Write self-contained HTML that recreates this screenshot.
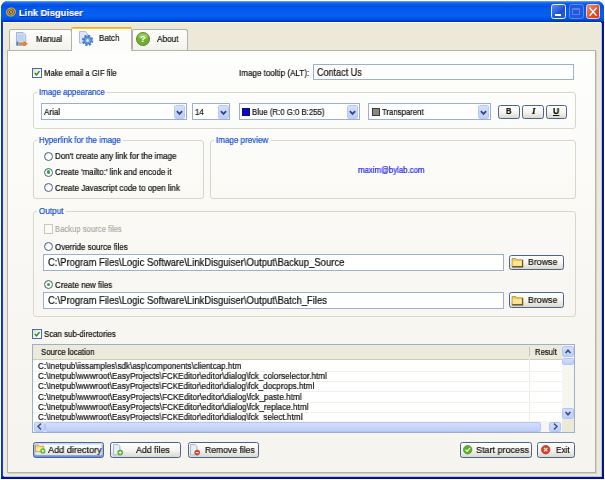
<!DOCTYPE html>
<html><head><meta charset="utf-8"><title>Link Disguiser</title>
<style>
*{box-sizing:border-box;margin:0;padding:0}
html,body{width:605px;height:480px;background:#fff;overflow:hidden}
body{position:relative;font-family:"Liberation Sans",sans-serif;font-size:8.5px;color:#111}
.a{position:absolute}
svg{position:absolute;overflow:visible}
.t{position:absolute;white-space:nowrap;line-height:10px;height:10px;transform-origin:0 0;will-change:transform;-webkit-text-stroke:0.22px}
.win{left:1px;top:0.9px;width:603px;height:477.7px;background:#02148f;border-radius:7px 7px 0 0;overflow:hidden}
.lb{left:0;top:20.6px;width:2.6px;height:455.4px;background:linear-gradient(90deg,#0626b0,#0c3fd8 35%,#1048e0)}
.title{left:0;top:0;width:603px;height:21.6px;background:linear-gradient(#7fb0f8 0,#1f6ff0 7%,#0458e8 16%,#0250e0 26%,#025cee 42%,#0360f2 72%,#0252e0 87%,#0236b8 97%,#0232b0 100%)}
.client{left:2.4px;top:21.4px;width:598px;height:453.5px;background:#ece9d8;border-top:1.3px solid #fbfaf5;box-shadow:0.9px 0.9px 0 #ccd6f2}
.page{left:7px;top:49.5px;width:588.8px;height:423.3px;border:1px solid #b3b5ad;background:linear-gradient(#fefefd,#f8f7f3 55%,#f5f4ee);box-shadow:1px 1px 0 #d6d3c4}
.tab{height:20.4px;top:29.3px;border:1px solid #b0b2aa;border-bottom:none;border-radius:2.5px 2.5px 0 0;background:linear-gradient(#fefefd,#f3f2ec)}
.tab.sel{top:27.2px;height:22.3px;background:#fcfcfb;border-top:none}
.tab.sel:after{content:"";position:absolute;left:0;right:0;bottom:-1.4px;height:1.6px;background:#fcfcfb}
.tab.sel:before{content:"";position:absolute;left:-1px;right:-1px;top:0;height:2px;background:linear-gradient(#eaa024,#ffcf50);border-radius:2.5px 2.5px 0 0}
.grp{border:1px solid #d9d7c9;border-radius:3px}
.gm{background:#faf9f6;height:3px}
.inp{border:1px solid #9cb0cc;background:#fff}
.cb{width:9.7px;height:9.7px;border:1px solid #4c6d9c;background:linear-gradient(135deg,#dcdcd2,#fbfbf8 70%)}
.rd{width:9.2px;height:9.2px;border:1px solid #4a6588;border-radius:50%;background:radial-gradient(circle at 65% 65%,#fff 35%,#d9d9cf)}
.rd.on:after{content:"";position:absolute;left:1.9px;top:1.9px;width:3.4px;height:3.4px;border-radius:50%;background:#33a533}
.btn{border:1px solid #4c6590;border-radius:2.5px;background:linear-gradient(#fff,#f4f3ee 55%,#dcd8cb)}
.btn.foc{box-shadow:inset 0 -1.7px 0 #6b94e6,inset 0 1.5px 0 #c6d7fb,inset 1.5px 0 0 #a4bff2,inset -1.5px 0 0 #a4bff2}
.dd{width:11px;height:14px;background:linear-gradient(#d3dffd,#bdcef8);border:1px solid #b9caf3;border-radius:1.5px}
.sb{background:linear-gradient(#d2defd,#bdcef9);border:1px solid #b4c5f2;border-radius:1.5px}
.gh{height:1px;background:#f2f1ea;left:33px;width:529px}
</style></head><body>
<div class="a win">
 <div class="a title"></div>
 <div class="a lb"></div>
 <div class="a client"></div>
</div>
<!-- app icon -->
<svg class="a" style="left:5.8px;top:7px" width="10" height="10" viewBox="0 0 10 10"><ellipse cx="5" cy="5" rx="4.5" ry="4" transform="rotate(-20 5 5)" fill="#7d7048" stroke="#e8a62c" stroke-width="1"/><ellipse cx="5" cy="5" rx="2.6" ry="2.2" transform="rotate(-20 5 5)" fill="#4a4a40" stroke="#d8b860" stroke-width=".7"/><circle cx="5.1" cy="5" r="1" fill="#f0c040"/></svg>
<!-- caption buttons -->
<div class="a" style="left:551.2px;top:4.2px;width:15px;height:15px;border:1px solid #e8eefc;border-radius:2.5px;background:linear-gradient(135deg,#5d8df2,#1d4fd6 60%,#2a5fe0)"></div>
<div class="a" style="left:555px;top:13.8px;width:5.5px;height:2px;background:#fff"></div>
<div class="a" style="left:568.5px;top:4.2px;width:15px;height:15px;border:1px solid #5c8af0;border-radius:2.5px;background:#2259dc"></div>
<div class="a" style="left:572.3px;top:8px;width:7.5px;height:7px;border:1px solid #5583ea;border-top-width:2px"></div>
<div class="a" style="left:585.8px;top:4.2px;width:14.6px;height:15px;border:1px solid #f0cfc4;border-radius:2.5px;background:linear-gradient(135deg,#ee9274,#df5230 55%,#cf3f18)"></div>
<svg class="a" style="left:589px;top:7.2px" width="8.2" height="9.6" viewBox="0 0 8.4 9.4"><path d="M0.6 0.6 L7.8 8.8 M7.8 0.6 L0.6 8.8" stroke="#fff" stroke-width="1.4" fill="none"/></svg>

<!-- tabs -->
<div class="a page"></div>
<div class="a tab" style="left:9.2px;width:62.4px"></div>
<div class="a tab" style="left:131.6px;width:56.4px"></div>
<div class="a tab sel" style="left:71.2px;width:60.6px"></div>
<!-- tab icons -->
<svg style="left:15.8px;top:32.4px" width="12.4" height="14" viewBox="0 0 12.4 14"><path d="M0.5 0.5h6.6l2.6 2.6v10.4h-9.2z" fill="#c9dcf4" stroke="#8faad0" stroke-width=".8"/><path d="M2 4h5.6M2 6h5.6M2 8h5.6" stroke="#a9bfdf" stroke-width=".7"/><rect x="0.6" y="9.6" width="1.8" height="3.6" fill="#5078b0"/><path d="M3.4 10.8h4.4v-1.3l3.8 2.2-3.8 2.2v-1.3h-4.4z" fill="#f0851a" stroke="#c8620c" stroke-width=".4"/></svg>
<svg style="left:79.4px;top:31.2px" width="15" height="16" viewBox="0 0 15 16"><path d="M0.5 0.5h6l2 2v9.5h-8z" fill="#dbe6f6" stroke="#9db2d2" stroke-width=".8"/><circle cx="8.6" cy="9.4" r="4.6" fill="none" stroke="#4a80cc" stroke-width="2.2" stroke-dasharray="2.1 1.5"/><circle cx="8.6" cy="9.4" r="3.8" fill="#6f9fdc" stroke="#3f70ba" stroke-width=".9"/><circle cx="8.6" cy="9.4" r="1.7" fill="#dfe9f8" stroke="#5a86c6" stroke-width=".5"/></svg>
<svg style="left:135.8px;top:32px" width="14" height="14" viewBox="0 0 14 14"><circle cx="7" cy="7" r="6.6" fill="#6fae2e" stroke="#4f8a1c" stroke-width=".8"/><ellipse cx="7" cy="4.2" rx="4.6" ry="2.8" fill="#a6d46a" opacity=".75"/><text x="7" y="10.3" text-anchor="middle" font-family="Liberation Sans,sans-serif" font-weight="bold" font-size="9.5" fill="#fff">?</text></svg>

<!-- row 1 -->
<div class="a cb" style="left:32.4px;top:68px"></div>
<svg style="left:34.2px;top:69.8px" width="6.4" height="6.4" viewBox="0 0 7 7"><path d="M0.9 3.2 L2.8 5.4 L6 1.2" stroke="#1f8f27" stroke-width="1.6" fill="none"/></svg>
<div class="a inp" style="left:313px;top:63.6px;width:260.6px;height:16.6px"></div>

<!-- Image appearance -->
<div class="a grp" style="left:33px;top:91.8px;width:542.6px;height:37px"></div>
<div class="a gm" style="left:37.2px;top:90.8px;width:70px"></div>
<div class="a inp" style="left:41px;top:103.4px;width:145.8px;height:17px"></div>
<div class="a dd" style="left:174.4px;top:104.9px"></div>
<svg style="left:176.4px;top:109.5px" width="7" height="5.1" viewBox="0 0 6 4.4"><path d="M0.7 0.9 L3 3.4 L5.3 0.9" stroke="#33497a" stroke-width="1.5" fill="none"/></svg>
<div class="a inp" style="left:191.6px;top:103.4px;width:38.6px;height:17px"></div>
<div class="a dd" style="left:217.8px;top:104.9px"></div>
<svg style="left:219.8px;top:109.5px" width="7" height="5.1" viewBox="0 0 6 4.4"><path d="M0.7 0.9 L3 3.4 L5.3 0.9" stroke="#33497a" stroke-width="1.5" fill="none"/></svg>
<div class="a inp" style="left:238.6px;top:103.4px;width:121.2px;height:17px"></div>
<div class="a dd" style="left:347.4px;top:104.9px"></div>
<svg style="left:349.4px;top:109.5px" width="7" height="5.1" viewBox="0 0 6 4.4"><path d="M0.7 0.9 L3 3.4 L5.3 0.9" stroke="#33497a" stroke-width="1.5" fill="none"/></svg>
<div class="a" style="left:242.4px;top:107.8px;width:8px;height:8.4px;background:#0808d8;border:1px solid #101060"></div>
<div class="a inp" style="left:368px;top:103.4px;width:122.6px;height:17px"></div>
<div class="a dd" style="left:478.2px;top:104.9px"></div>
<svg style="left:480.2px;top:109.5px" width="7" height="5.1" viewBox="0 0 6 4.4"><path d="M0.7 0.9 L3 3.4 L5.3 0.9" stroke="#33497a" stroke-width="1.5" fill="none"/></svg>
<div class="a" style="left:372px;top:107.8px;width:8.4px;height:8.4px;background:#8a8884;border:1px solid #3a3a3a"></div>
<div class="a btn" style="left:497.6px;top:104.8px;width:22.6px;height:14px"></div>
<div class="a btn" style="left:521.8px;top:104.8px;width:22.4px;height:14px"></div>
<div class="a btn" style="left:546px;top:104.8px;width:21px;height:14px"></div>

<!-- Hyperlink -->
<div class="a grp" style="left:33px;top:139.8px;width:171.4px;height:59.6px"></div>
<div class="a gm" style="left:37.2px;top:138.8px;width:86px"></div>
<div class="a rd" style="left:44px;top:151.8px"></div>
<div class="a rd on" style="left:44px;top:167.6px"></div>
<div class="a rd" style="left:44px;top:183.2px"></div>

<!-- Image preview -->
<div class="a grp" style="left:210.2px;top:139.8px;width:365.4px;height:59.6px"></div>
<div class="a gm" style="left:214.4px;top:138.8px;width:56.4px"></div>

<!-- Output -->
<div class="a grp" style="left:33px;top:210.8px;width:542.6px;height:106.6px"></div>
<div class="a gm" style="left:37.2px;top:209.8px;width:28.6px"></div>
<div class="a cb" style="left:43.6px;top:224.2px;border-color:#cbc8b8;background:#fbfaf7"></div>
<div class="a rd" style="left:43.9px;top:241.8px"></div>
<div class="a inp" style="left:43.4px;top:254.4px;width:460.6px;height:16.4px"></div>
<div class="a btn" style="left:509.2px;top:255px;width:55px;height:15.4px"></div>
<div class="a rd on" style="left:43.9px;top:280.2px"></div>
<div class="a inp" style="left:43.4px;top:292.2px;width:460.6px;height:16.4px"></div>
<div class="a btn" style="left:509.2px;top:292.4px;width:55px;height:15.4px"></div>
<!-- folder icons -->
<svg style="left:511px;top:257.4px" width="12.6" height="10.4" viewBox="0 0 11 10"><path d="M0.5 1.5h3.6l1 1.2h5.4v6.6h-10z" fill="#f0cc5c" stroke="#b8923a" stroke-width=".8"/><path d="M1.2 4h8.4v4.4h-8.4z" fill="#fbe89a"/><path d="M0.6 9.5h10.1V3" stroke="#5e4a1e" stroke-width="1" fill="none"/></svg>
<svg style="left:511px;top:294.8px" width="12.6" height="10.4" viewBox="0 0 11 10"><path d="M0.5 1.5h3.6l1 1.2h5.4v6.6h-10z" fill="#f0cc5c" stroke="#b8923a" stroke-width=".8"/><path d="M1.2 4h8.4v4.4h-8.4z" fill="#fbe89a"/><path d="M0.6 9.5h10.1V3" stroke="#5e4a1e" stroke-width="1" fill="none"/></svg>

<!-- Scan -->
<div class="a cb" style="left:32.4px;top:329px"></div>
<svg style="left:34.2px;top:330.8px" width="6.4" height="6.4" viewBox="0 0 7 7"><path d="M0.9 3.2 L2.8 5.4 L6 1.2" stroke="#1f8f27" stroke-width="1.6" fill="none"/></svg>

<!-- list -->
<div class="a inp" style="left:32.4px;top:344.4px;width:543px;height:88.6px"></div>
<div class="a" style="left:33.4px;top:345.4px;width:528.6px;height:14.2px;background:#ebeadb;border-bottom:1.4px solid #cfccbc"></div>
<div class="a" style="left:529px;top:347px;width:1px;height:9px;background:#c8c5b2"></div>
<div class="a" style="left:529px;top:358.4px;width:1px;height:63px;background:#eeede5"></div>
<div class="a gh" style="top:370.6px"></div>
<div class="a gh" style="top:381px"></div>
<div class="a gh" style="top:391.4px"></div>
<div class="a gh" style="top:401.8px"></div>
<div class="a gh" style="top:412.2px"></div>
<!-- vscroll -->
<div class="a" style="left:562px;top:345.4px;width:12.4px;height:74px;background:#f6f5f0"></div>
<div class="a sb" style="left:562.4px;top:345.8px;width:11.6px;height:11.6px"></div>
<div class="a sb" style="left:562.4px;top:358px;width:11.6px;height:7px"></div>
<div class="a sb" style="left:562.4px;top:408.4px;width:11.6px;height:10.6px"></div>
<svg style="left:565.2px;top:349.2px" width="6" height="5" viewBox="0 0 6 5"><path d="M0.6 4 L3 1.2 L5.4 4" stroke="#3a507c" stroke-width="1.7" fill="none"/></svg>
<svg style="left:565.2px;top:411.4px" width="6" height="5" viewBox="0 0 6 5"><path d="M0.6 1 L3 3.8 L5.4 1" stroke="#3a507c" stroke-width="1.7" fill="none"/></svg>
<!-- hscroll -->
<div class="a" style="left:33.4px;top:421.4px;width:528.6px;height:10.6px;background:#f6f5f0"></div>
<div class="a" style="left:562px;top:419.4px;width:12.4px;height:12.6px;background:#ece9d8"></div>
<div class="a sb" style="left:33.8px;top:421.6px;width:11px;height:10.2px"></div>
<div class="a sb" style="left:45.4px;top:421.6px;width:496px;height:10.2px"></div>
<div class="a sb" style="left:549.4px;top:421.6px;width:11.6px;height:10.2px"></div>
<svg style="left:37px;top:423.4px" width="5" height="7" viewBox="0 0 5 7"><path d="M4 0.6 L1 3.5 L4 6.4" stroke="#3f557f" stroke-width="1.5" fill="none"/></svg>
<svg style="left:553px;top:423.4px" width="5" height="7" viewBox="0 0 5 7"><path d="M1 0.6 L4 3.5 L1 6.4" stroke="#3f557f" stroke-width="1.5" fill="none"/></svg>

<!-- bottom buttons -->
<div class="a btn foc" style="left:33px;top:442px;width:70.8px;height:15.6px"></div>
<div class="a btn" style="left:110.2px;top:442px;width:71px;height:15.6px"></div>
<div class="a btn" style="left:187.6px;top:442px;width:71.8px;height:15.6px"></div>
<div class="a btn" style="left:460.2px;top:442px;width:71.4px;height:15.6px"></div>
<div class="a btn" style="left:537.4px;top:442px;width:37.8px;height:15.6px"></div>
<!-- button icons -->
<svg style="left:35.4px;top:444.2px" width="11" height="10" viewBox="0 0 12 11"><path d="M0.5 1.2h3.4l1 1.2h4.8v6h-9.2z" fill="#f3d36a" stroke="#b8923a" stroke-width=".8"/><path d="M1.2 3.8h7.8v4h-7.8z" fill="#fbe89a"/><circle cx="8.6" cy="7.6" r="2.8" fill="#4cb32c"/><path d="M8.6 6v3.2M7 7.6h3.2" stroke="#fff" stroke-width="1"/></svg>
<svg style="left:112.8px;top:443.6px" width="11" height="12" viewBox="0 0 11 12"><path d="M0.5 0.5h4.6l1.8 1.8v8.5h-6.4z" fill="#e8eef8" stroke="#9aa8bc" stroke-width=".8"/><circle cx="7.2" cy="8.6" r="2.8" fill="#4cb32c"/><path d="M7.2 7v3.2M5.6 8.6h3.2" stroke="#fff" stroke-width="1"/></svg>
<svg style="left:190.4px;top:443.6px" width="11" height="12" viewBox="0 0 11 12"><path d="M0.5 0.5h4.6l1.8 1.8v8.5h-6.4z" fill="#e8eef8" stroke="#9aa8bc" stroke-width=".8"/><circle cx="7.2" cy="8.6" r="2.8" fill="#e0402c"/><path d="M5.8 8.6h2.8" stroke="#fff" stroke-width="1.1"/></svg>
<svg style="left:463.4px;top:445px" width="9.4" height="9.4" viewBox="0 0 10 10"><circle cx="5" cy="5" r="4.5" fill="#62b02c" stroke="#3f8a1a" stroke-width=".7"/><path d="M2.6 5 L4.4 6.8 L7.4 3.2" stroke="#e8f8c8" stroke-width="1.3" fill="none"/></svg>
<svg style="left:540.5px;top:445px" width="9.4" height="9.4" viewBox="0 0 10 10"><circle cx="5" cy="5" r="4.5" fill="#dc4028" stroke="#a82814" stroke-width=".7"/><path d="M3.2 3.2 L6.8 6.8 M6.8 3.2 L3.2 6.8" stroke="#fce0d8" stroke-width="1.3" fill="none"/></svg>

<div class="t" style="left:19.2px;top:8.1px;font-size:9.5px;transform:scaleX(0.975);font-weight:bold;color:#fff;text-shadow:0.6px 0.6px 0 #0a2a8a">Link Disguiser</div>
<div class="t" style="left:35.6px;top:34.1px;font-size:9.2px;transform:scaleX(0.869);">Manual</div>
<div class="t" style="left:99.2px;top:32.5px;font-size:9.2px;transform:scaleX(0.872);">Batch</div>
<div class="t" style="left:157.0px;top:34.1px;font-size:9.2px;transform:scaleX(0.895);">About</div>
<div class="t" style="left:43.8px;top:67.9px;font-size:9.2px;transform:scaleX(0.835);">Make email a GIF file</div>
<div class="t" style="left:239.3px;top:67.9px;font-size:9.2px;transform:scaleX(0.877);">Image tooltip (ALT):</div>
<div class="t" style="left:317.3px;top:67.6px;font-size:10px;transform:scaleX(0.904);">Contact Us</div>
<div class="t" style="left:39.2px;top:86.6px;font-size:9.2px;transform:scaleX(0.859);color:#1a4fd0">Image appearance</div>
<div class="t" style="left:44.2px;top:107.0px;font-size:9.2px;transform:scaleX(0.875);">Arial</div>
<div class="t" style="left:195.2px;top:107.0px;font-size:9.2px;transform:scaleX(0.860);">14</div>
<div class="t" style="left:252.3px;top:107.0px;font-size:9.2px;transform:scaleX(0.850);">Blue (R:0 G:0 B:255)</div>
<div class="t" style="left:382.4px;top:107.0px;font-size:9.2px;transform:scaleX(0.845);">Transparent</div>
<div class="t" style="left:506.2px;top:106.2px;font-size:9.2px;transform:scaleX(0.813);font-weight:bold">B</div>
<div class="t" style="left:532.0px;top:106.2px;font-size:9px;transform:scaleX(0.996);font-weight:bold;font-style:italic;font-family:'Liberation Serif',serif">I</div>
<div class="t" style="left:553.0px;top:106.2px;font-size:9.2px;transform:scaleX(0.934);font-weight:bold;text-decoration:underline">U</div>
<div class="t" style="left:39.2px;top:134.8px;font-size:9.2px;transform:scaleX(0.866);color:#1a4fd0">Hyperlink for the image</div>
<div class="t" style="left:55.3px;top:151.4px;font-size:9.2px;transform:scaleX(0.873);">Don't create any link for the image</div>
<div class="t" style="left:55.3px;top:167.2px;font-size:9.2px;transform:scaleX(0.864);">Create 'mailto:' link and encode it</div>
<div class="t" style="left:55.3px;top:182.8px;font-size:9.2px;transform:scaleX(0.870);">Create Javascript code to open link</div>
<div class="t" style="left:216.3px;top:134.8px;font-size:9.2px;transform:scaleX(0.875);color:#1a4fd0">Image preview</div>
<div class="t" style="left:357.9px;top:164.9px;font-size:8.3px;transform:scaleX(0.940);color:#2a2ae0">maxim@bylab.com</div>
<div class="t" style="left:39.2px;top:205.8px;font-size:9.2px;transform:scaleX(0.888);color:#1a4fd0">Output</div>
<div class="t" style="left:55.3px;top:223.6px;font-size:9.2px;transform:scaleX(0.837);color:#aeac9f">Backup source files</div>
<div class="t" style="left:55.3px;top:241.6px;font-size:9.2px;transform:scaleX(0.863);">Override source files</div>
<div class="t" style="left:47.5px;top:257.1px;font-size:10.5px;transform:scaleX(0.902);">C:\Program Files\Logic Software\LinkDisguiser\Output\Backup_Source</div>
<div class="t" style="left:528.2px;top:257.2px;font-size:9.6px;transform:scaleX(0.916);">Browse</div>
<div class="t" style="left:55.3px;top:280.2px;font-size:9.2px;transform:scaleX(0.868);">Create new files</div>
<div class="t" style="left:47.5px;top:294.9px;font-size:10.5px;transform:scaleX(0.902);">C:\Program Files\Logic Software\LinkDisguiser\Output\Batch_Files</div>
<div class="t" style="left:528.2px;top:295.1px;font-size:9.6px;transform:scaleX(0.916);">Browse</div>
<div class="t" style="left:43.8px;top:329.0px;font-size:9.2px;transform:scaleX(0.856);">Scan sub-directories</div>
<div class="t" style="left:40.5px;top:347.4px;font-size:9.2px;transform:scaleX(0.845);">Source location</div>
<div class="t" style="left:535.0px;top:347.4px;font-size:9.2px;transform:scaleX(0.837);">Result</div>
<div class="t" style="left:38.0px;top:360.7px;font-size:9.2px;transform:scaleX(0.879);">C:\Inetpub\iissamples\sdk\asp\components\clientcap.htm</div>
<div class="t" style="left:38.0px;top:371.0px;font-size:9.2px;transform:scaleX(0.888);">C:\Inetpub\wwwroot\EasyProjects\FCKEditor\editor\dialog\fck_colorselector.html</div>
<div class="t" style="left:38.0px;top:381.4px;font-size:9.2px;transform:scaleX(0.887);">C:\Inetpub\wwwroot\EasyProjects\FCKEditor\editor\dialog\fck_docprops.html</div>
<div class="t" style="left:38.0px;top:391.7px;font-size:9.2px;transform:scaleX(0.890);">C:\Inetpub\wwwroot\EasyProjects\FCKEditor\editor\dialog\fck_paste.html</div>
<div class="t" style="left:38.0px;top:401.9px;font-size:9.2px;transform:scaleX(0.890);">C:\Inetpub\wwwroot\EasyProjects\FCKEditor\editor\dialog\fck_replace.html</div>
<div class="t" style="left:38.0px;top:412.2px;font-size:9.2px;transform:scaleX(0.888);height:9.2px;overflow:hidden;">C:\Inetpub\wwwroot\EasyProjects\FCKEditor\editor\dialog\fck_select.html</div>
<div class="t" style="left:48.0px;top:444.8px;font-size:9.6px;transform:scaleX(0.950);">Add directory</div>
<div class="t" style="left:135.7px;top:444.8px;font-size:9.6px;transform:scaleX(0.916);">Add files</div>
<div class="t" style="left:205.0px;top:444.8px;font-size:9.6px;transform:scaleX(0.896);">Remove files</div>
<div class="t" style="left:476.0px;top:444.8px;font-size:9.6px;transform:scaleX(0.938);">Start process</div>
<div class="t" style="left:556.0px;top:444.8px;font-size:9.6px;transform:scaleX(0.856);">Exit</div>
</body></html>
